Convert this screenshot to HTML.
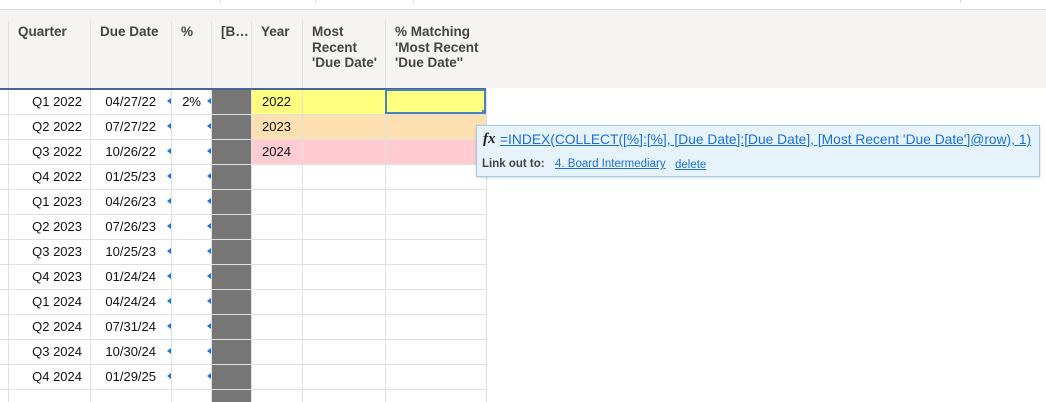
<!DOCTYPE html>
<html><head><style>
*{margin:0;padding:0;box-sizing:border-box}
body{width:1046px;height:402px;overflow:hidden;background:#fff;font-family:"Liberation Sans",Arial,sans-serif;position:relative}
.a{position:absolute}
.hdr{left:0;top:9px;width:1046px;height:79px;background:#f5f4f2;border-top:1px solid #ddd}
.hc{position:absolute;top:14px;font-size:13.5px;font-weight:bold;color:#444;line-height:15.5px}
.vl{position:absolute;width:1px;background:#e0e0e0}
.hl{position:absolute;left:0;width:486px;height:1px;background:#e0e0e0}
.t{position:absolute;font-size:13px;color:#111;line-height:25px}
.tri{position:absolute;width:0;height:0;border-top:3px solid transparent;border-bottom:3px solid transparent;border-right:4px solid #1a73e8}
</style></head><body>
<div class="a" style="left:0;top:0;width:1046px;height:8px;background:#fff"></div>
<div class="vl" style="left:220px;top:0;height:3px;background:#ddd"></div>
<div class="vl" style="left:315px;top:0;height:3px;background:#ddd"></div>
<div class="vl" style="left:413px;top:0;height:3px;background:#ddd"></div>
<div class="vl" style="left:960px;top:0;height:3px;background:#ddd"></div>
<div class="a hdr"></div>
<div class="hc" style="left:18px;top:24px">Quarter</div>
<div class="hc" style="left:100px;top:24px">Due Date</div>
<div class="hc" style="left:181px;top:24px">%</div>
<div class="hc" style="left:221px;top:24px">[B…</div>
<div class="hc" style="left:261px;top:24px">Year</div>
<div class="hc" style="left:312px;top:24px">Most<br>Recent<br>'Due Date'</div>
<div class="hc" style="left:395px;top:24px">% Matching<br>'Most Recent<br>'Due Date''</div>
<div class="a" style="left:251px;top:89px;width:235px;height:25px;background:#ffff80"></div>
<div class="a" style="left:251px;top:114px;width:235px;height:25px;background:#ffe0b0"></div>
<div class="a" style="left:251px;top:139px;width:235px;height:25px;background:#ffccd2"></div>
<div class="a" style="left:212px;top:89px;width:39px;height:313px;background:#767676"></div>
<div class="vl" style="left:8px;top:21px;height:381px"></div>
<div class="vl" style="left:90px;top:21px;height:381px"></div>
<div class="vl" style="left:171px;top:21px;height:381px"></div>
<div class="vl" style="left:211px;top:21px;height:381px"></div>
<div class="vl" style="left:251px;top:21px;height:381px"></div>
<div class="vl" style="left:302px;top:21px;height:381px"></div>
<div class="vl" style="left:385px;top:21px;height:381px"></div>
<div class="vl" style="left:486px;top:89px;height:313px"></div>
<div class="hl" style="top:114px"></div><div class="hl" style="top:139px"></div><div class="hl" style="top:164px"></div><div class="hl" style="top:189px"></div><div class="hl" style="top:214px"></div><div class="hl" style="top:239px"></div><div class="hl" style="top:264px"></div><div class="hl" style="top:289px"></div><div class="hl" style="top:314px"></div><div class="hl" style="top:339px"></div><div class="hl" style="top:364px"></div><div class="hl" style="top:389px"></div>
<div class="a" style="left:0;top:88px;width:486px;height:2px;background:#4a6597"></div>
<div class="a" style="left:385px;top:89px;width:101px;height:25px;border:2px solid #4a7fc1"></div>
<div class="a" style="left:482px;top:110px;width:4px;height:4px;background:#4a7fc1"></div>
<div class="t" style="left:8px;top:89px;width:74px;text-align:right">Q1 2022<br>Q2 2022<br>Q3 2022<br>Q4 2022<br>Q1 2023<br>Q2 2023<br>Q3 2023<br>Q4 2023<br>Q1 2024<br>Q2 2024<br>Q3 2024<br>Q4 2024</div>
<div class="t" style="left:90px;top:89px;width:66px;text-align:right">04/27/22<br>07/27/22<br>10/26/22<br>01/25/23<br>04/26/23<br>07/26/23<br>10/25/23<br>01/24/24<br>04/24/24<br>07/31/24<br>10/30/24<br>01/29/25</div>
<div class="t" style="left:171px;top:89px;width:30px;text-align:right">2%</div>
<div class="t" style="left:251px;top:89px;width:51px;text-align:center">2022<br>2023<br>2024</div>
<div id="tris"></div>
<script>
var h='';for(var i=0;i<12;i++){var y=89+i*25+9;h+='<div class="tri" style="left:167px;top:'+y+'px"></div><div class="tri" style="left:207px;top:'+y+'px"></div>';}
document.getElementById('tris').innerHTML=h;
</script>
<div class="a" style="left:476px;top:125px;width:564px;height:52px;background:#e6f3fb;border:1px solid #9fcbe8;box-shadow:0 1px 3px rgba(0,0,0,.15)">
<div class="a" style="left:6px;top:5px;font-family:'Liberation Serif',serif;font-style:italic;font-weight:bold;font-size:15px;color:#222">fx</div>
<div class="a" style="left:23px;top:6px;font-size:13.8px;color:#1a6fd8;text-decoration:underline;white-space:nowrap">=INDEX(COLLECT([%]:[%], [Due Date]:[Due Date], [Most Recent 'Due Date']@row), 1)</div>
<div class="a" style="left:5px;top:32px;font-size:11.5px;font-weight:bold;color:#444">Link out to:</div>
<div class="a" style="left:78px;top:32px;font-size:11.5px;color:#1a6fd8;text-decoration:underline">4. Board Intermediary</div>
<div class="a" style="left:198px;top:33px;font-size:11.5px;color:#1a6fd8;text-decoration:underline">delete</div>
</div>
</body></html>
